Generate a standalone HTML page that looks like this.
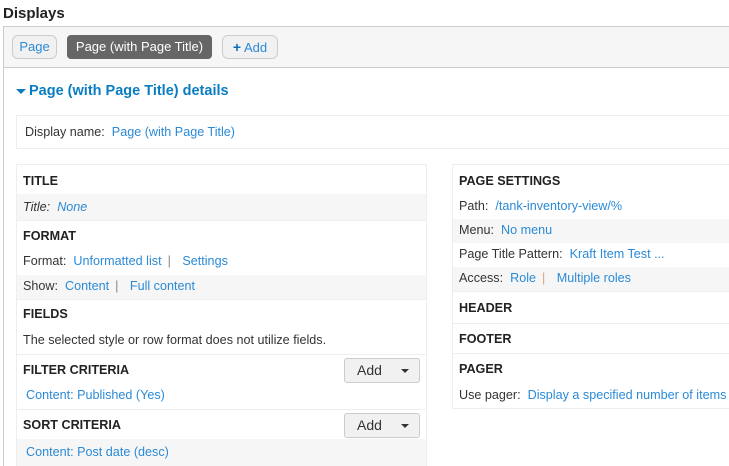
<!DOCTYPE html>
<html><head><style>
*{margin:0;padding:0;box-sizing:border-box}
html,body{width:729px;height:466px;overflow:hidden}
body{background:#fff;font-family:"Liberation Sans",sans-serif;font-size:12.6px;color:#333;position:relative}
.a{position:absolute}
.l{color:#2b8ad6}
.h{font-weight:bold;font-size:12.6px;color:#222}
.sec{position:absolute;left:0;right:0}
.g{background:#f6f6f6}
.btn{position:absolute;border:1px solid #ccc;border-radius:6px;background:#f1f1f1;font-size:13px;line-height:22px;text-align:center}
.sep{color:#888;margin:0 8px 0 6px}
</style></head><body>
<div class="a" style="left:3px;top:5px;font-size:15px;font-weight:bold;color:#222">Displays</div>
<div class="a" style="left:3px;top:26px;width:740px;height:460px;border:1px solid #ccc;border-bottom:none"></div>
<div class="a" style="left:4px;top:27px;width:730px;height:41px;background:#f6f6f6;border-bottom:1px solid #ccc"></div>
<div class="btn" style="left:12px;top:35px;width:45px;height:24px;color:#2b8ad6">Page</div>
<div class="btn" style="left:67px;top:35px;width:145px;height:24px;background:#666;border-color:#666;color:#fff;border-radius:4px">Page (with Page Title)</div>
<div class="btn" style="left:222px;top:35px;width:56px;height:24px;color:#2b8ad6"><b style="font-size:14px;color:#0a6fb8">+</b> Add</div>
<div class="a" style="left:16px;top:83px;font-size:14.5px;font-weight:bold;color:#0a7dc2"><span style="display:inline-block;width:0;height:0;border-left:5px solid transparent;border-right:5px solid transparent;border-top:5px solid #0a7dc2;margin-right:3px;vertical-align:middle"></span>Page (with Page Title) details</div>
<div class="a" style="left:16px;top:115px;width:720px;height:34px;border:1px solid #eee;padding:9px 0 0 8px">Display name: &nbsp;<span class="l">Page (with Page Title)</span></div>

<div class="a" style="left:16px;top:164px;width:411px;height:310px;border:1px solid #eee">
<div class="sec" style="top:0;height:29px;padding:9px 6px" ><span class="h">TITLE</span></div>
<div class="sec g" style="top:29px;height:26px;padding:6px 6px;font-style:italic">Title: &nbsp;<span class="l">None</span></div>
<div class="sec" style="top:55px;height:29px;padding:8px 6px;border-top:1px solid #eee"><span class="h">FORMAT</span></div>
<div class="sec" style="top:84px;height:26px;padding:5px 6px">Format: &nbsp;<span class="l">Unformatted list</span><span class="sep">|</span> <span class="l">Settings</span></div>
<div class="sec g" style="top:110px;height:24px;padding:4px 6px">Show: &nbsp;<span class="l">Content</span><span class="sep">|</span> <span class="l">Full content</span></div>
<div class="sec" style="top:134px;height:28px;padding:7px 6px;border-top:1px solid #eee"><span class="h">FIELDS</span></div>
<div class="sec" style="top:162px;height:27px;padding:6px 6px">The selected style or row format does not utilize fields.</div>
<div class="sec" style="top:189px;height:29px;padding:8px 6px;border-top:1px solid #eee"><span class="h">FILTER CRITERIA</span></div>
<div class="sec" style="top:218px;height:26px;padding:5px 9px"><span class="l">Content: Published (Yes)</span></div>
<div class="sec" style="top:244px;height:30px;padding:8px 6px;border-top:1px solid #eee"><span class="h">SORT CRITERIA</span></div>
<div class="sec g" style="top:274px;height:36px;padding:6px 9px"><span class="l">Content: Post date (desc)</span></div>
</div>
<div class="btn" style="left:344px;top:358px;width:76px;height:25px;border-radius:3px;text-align:left;padding-left:12px;font-size:14px">Add<span style="position:absolute;right:10px;top:10px;border-left:4px solid transparent;border-right:4px solid transparent;border-top:4px solid #333"></span></div>
<div class="btn" style="left:344px;top:413px;width:76px;height:25px;border-radius:3px;text-align:left;padding-left:12px;font-size:14px">Add<span style="position:absolute;right:10px;top:10px;border-left:4px solid transparent;border-right:4px solid transparent;border-top:4px solid #333"></span></div>

<div class="a" style="left:452px;top:164px;width:300px;height:245px;border:1px solid #eee">
<div class="sec" style="top:0;height:29px;padding:9px 6px"><span class="h">PAGE SETTINGS</span></div>
<div class="sec" style="top:29px;height:25px;padding:5px 6px">Path: &nbsp;<span class="l">/tank-inventory-view/%</span></div>
<div class="sec g" style="top:54px;height:24px;padding:4px 6px">Menu: &nbsp;<span class="l">No menu</span></div>
<div class="sec" style="top:78px;height:24px;padding:4px 6px">Page Title Pattern: &nbsp;<span class="l">Kraft Item Test ...</span></div>
<div class="sec g" style="top:102px;height:24px;padding:4px 6px">Access: &nbsp;<span class="l">Role</span><span class="sep" style="color:#e0a080">|</span> <span class="l">Multiple roles</span></div>
<div class="sec" style="top:126px;height:32px;padding:9px 6px;border-top:1px solid #eee"><span class="h">HEADER</span></div>
<div class="sec" style="top:158px;height:30px;padding:8px 6px;border-top:1px solid #eee"><span class="h">FOOTER</span></div>
<div class="sec" style="top:188px;height:29px;padding:8px 6px;border-top:1px solid #eee"><span class="h">PAGER</span></div>
<div class="sec" style="top:217px;height:26px;padding:6px 6px;white-space:nowrap">Use pager: &nbsp;<span class="l">Display a specified number of items</span></div>
</div>
</body></html>
